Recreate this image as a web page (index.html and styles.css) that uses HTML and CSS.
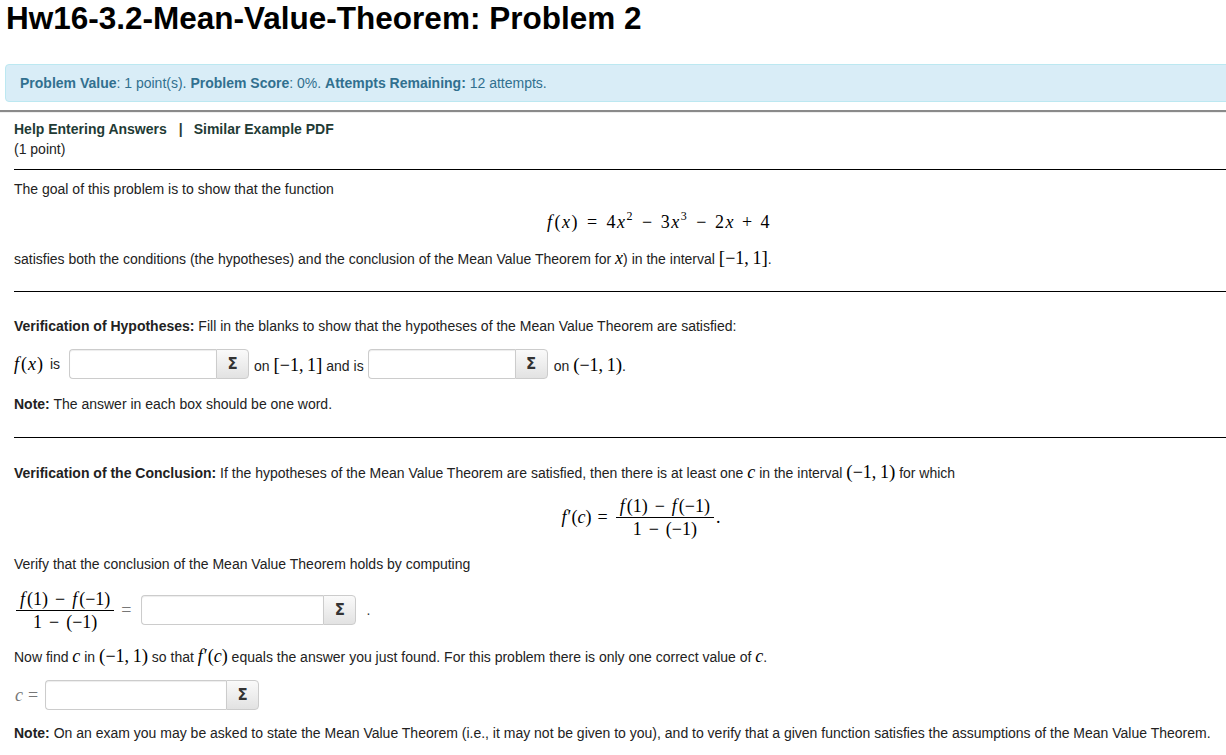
FILE: index.html
```html
<!DOCTYPE html>
<html>
<head>
<meta charset="utf-8">
<title>Hw16-3.2-Mean-Value-Theorem: Problem 2</title>
<link rel="stylesheet" href="styles.css">
</head>
<body>
<div class="page">
  <h1 class="title">Hw16-3.2-Mean-Value-Theorem: Problem 2</h1>
  <div class="alert"><b>Problem Value</b>: 1 point(s). <b>Problem Score</b>: 0%. <b>Attempts Remaining:</b> 12 attempts.</div>
  <hr class="rule-gray">
  <div class="problem">
    <div class="links"><a href="#">Help Entering Answers</a><span class="sep">|</span><a href="#">Similar Example PDF</a></div>
    <div class="pts">(1 point)</div>
    <hr class="rule rule-first">

    <p class="txt goal">The goal of this problem is to show that the function</p>
    <div class="display d-func"><span class="m"><span class="mi f">f</span>(<span class="mi">x</span>)<span class="rel">=</span>4<span class="mi">x</span><sup>2</sup><span class="op">−</span>3<span class="mi">x</span><sup>3</sup><span class="op">−</span>2<span class="mi">x</span><span class="op">+</span>4</span></div>
    <p class="txt satisfies">satisfies both the conditions (the hypotheses) and the conclusion of the Mean Value Theorem for <span class="m"><span class="mi">x</span></span>) in the interval <span class="m"><span class="br">[</span>−1,&#8201;1<span class="br">]</span></span>.</p>
    <hr class="rule rule-2">

    <p class="txt hyp"><b>Verification of Hypotheses:</b> Fill in the blanks to show that the hypotheses of the Mean Value Theorem are satisfied:</p>
    <div class="row row-hyp">
      <span class="m fx"><span class="mi f">f</span>(<span class="mi">x</span>)</span><span class="w">&nbsp;is</span>
      <span class="ans a1 first"><input class="ans-box" type="text"><span class="ans-btn">Σ</span></span>
      <span class="w">on <span class="m"><span class="br">[</span>−1,&#8201;1<span class="br">]</span></span> and is</span>
      <span class="ans a1 second"><input class="ans-box" type="text"><span class="ans-btn">Σ</span></span>
      <span class="w">on <span class="m"><span class="br">(</span>−1,&#8201;1<span class="br">)</span></span>.</span>
    </div>
    <p class="txt note1"><b>Note:</b> The answer in each box should be one word.</p>
    <hr class="rule rule-3">

    <p class="txt concl"><b>Verification of the Conclusion:</b> If the hypotheses of the Mean Value Theorem are satisfied, then there is at least one <span class="m"><span class="mi">c</span></span> in the interval <span class="m"><span class="br">(</span>−1,&#8201;1<span class="br">)</span></span> for which</p>
    <div class="display d-mvt"><span class="m dm"><span class="mi f">f</span>′(<span class="mi">c</span>)<span class="rel">=</span><span class="frac"><span class="num"><span class="mi f">f</span>(1)<span class="op">−</span><span class="mi f">f</span>(−1)</span><span class="den">1<span class="op">−</span>(−1)</span></span>.</span></div>
    <p class="txt verify">Verify that the conclusion of the Mean Value Theorem holds by computing</p>
    <div class="row row-frac">
      <span class="m dm"><span class="frac"><span class="num"><span class="mi f">f</span>(1)<span class="op">−</span><span class="mi f">f</span>(−1)</span><span class="den">1<span class="op">−</span>(−1)</span></span><span class="rel gray">=</span></span>
      <span class="ans a2"><input class="ans-box" type="text"><span class="ans-btn">Σ</span></span>
      <span class="w dot">.</span>
    </div>
    <p class="txt nowfind">Now find <span class="m"><span class="mi">c</span></span> in <span class="m"><span class="br">(</span>−1,&#8201;1<span class="br">)</span></span> so that <span class="m"><span class="mi f">f</span>′(<span class="mi">c</span>)</span> equals the answer you just found. For this problem there is only one correct value of <span class="m"><span class="mi">c</span></span>.</p>
    <div class="row row-c">
      <span class="m gray"><span class="mi">c</span><span class="rel">=</span></span>
      <span class="ans a3"><input class="ans-box" type="text"><span class="ans-btn">Σ</span></span>
    </div>
    <p class="txt note2"><b>Note:</b> On an exam you may be asked to state the Mean Value Theorem (i.e., it may not be given to you), and to verify that a given function satisfies the assumptions of the Mean Value Theorem.</p>
  </div>
</div>
</body>
</html>
```
FILE: styles.css
```css
html { overflow: hidden; }
body {
  margin: 0;
  font-family: "Liberation Sans", Arial, sans-serif;
  font-size: 14px;
  color: #222;
  background: #fff;
}
.page { width: 1290px; }
.title {
  margin: 0;
  padding-left: 6px;
  font-size: 31.5px;
  line-height: 36px;
  font-weight: bold;
  color: #000;
}
.alert {
  margin: 28px 0 0 5px;
  height: 36px;
  line-height: 36px;
  padding: 0 14px;
  background: #d9edf7;
  border: 1px solid #bce8f1;
  border-radius: 4px;
  color: #31708f;
}
.rule-gray {
  margin: 8px 0 0 0;
  border: 0;
  border-top: 2px solid #8a8a8a;
  border-bottom: 1px solid #eee;
  height: 0;
}
.problem { padding-left: 14px; }
.links { margin-top: 6px; line-height: 20px; height: 20px; font-weight: bold; }
.links a { color: #1f3b35; text-decoration: none; }
.links .sep { margin: 0 11px 0 12px; color: #1f3b35; }
.pts { line-height: 20px; height: 20px; }
.rule { margin: 0; border: 0; border-top: 1px solid #000; height: 0; }
.rule-first { margin-top: 10px; }
.txt { margin: 0; line-height: 20px; height: 20px; white-space: nowrap; }
.goal { margin-top: 9px; }
.m {
  font-family: "Liberation Serif", "DejaVu Serif", serif;
  font-size: 18px;
  line-height: 1;
  color: #000;
}
.mi { font-style: italic; }
.mi.f { margin-right: 1px; }
.br { font-size: 19px; }
.op { margin: 0 4px; }
.rel { margin: 0 5px; }
.m.gray, .gray { color: #777; }
sup { font-size: 12px; line-height: 0; vertical-align: 8px; margin-right: 1px; }
.display { text-align: center; }
.d-func { margin-top: 11px; line-height: 26px; height: 26px; padding-left: 14px; }
.d-func .m { letter-spacing: 1.5px; }
.d-func .op { margin: 0 7px; }
.d-func .rel { margin: 0 8px; }
.satisfies { margin-top: 12px; }
.rule-2 { margin-top: 23px; }
.hyp { margin-top: 24px; }
.row { display: flex; align-items: center; }
.row-hyp { margin-top: 13px; height: 30px; }
.fx { letter-spacing: 1px; margin-right: 2px; }
.w { white-space: pre; }
.ans {
  display: inline-flex;
  height: 30px;
  margin: 0 6px 0 9px;
}
.ans.first { margin: 0 5px 0 9px; }
.ans.second { margin: 0 6px 0 4px; }
.ans-box {
  box-sizing: border-box;
  height: 30px;
  margin: 0;
  border: 1px solid #ccc;
  border-right: 0;
  border-radius: 4px 0 0 4px;
  box-shadow: inset 0 1px 1px rgba(0,0,0,0.075);
  background: #fff;
  padding: 4px 6px;
  font: 14px "Liberation Sans", Arial, sans-serif;
}
.a1 .ans-box { width: 147px; }
.a2 .ans-box { width: 182px; }
.a3 .ans-box { width: 181px; }
.ans-btn {
  box-sizing: border-box;
  width: 33px;
  height: 30px;
  border: 1px solid #ccc;
  border-radius: 0 4px 4px 0;
  background: linear-gradient(#fafafa, #e2e2e2);
  display: flex;
  align-items: center;
  justify-content: center;
  font-family: "DejaVu Sans", sans-serif;
  font-weight: bold;
  font-size: 15px;
  color: #333;
}
.note1 { margin-top: 15px; }
.rule-3 { margin-top: 23px; }
.concl { margin-top: 24px; }
.d-mvt { margin-top: 11px; height: 48px; display: flex; justify-content: center; align-items: center; }
.d-mvt .dm { margin-right: 22px; }
.d-mvt .rel { margin: 0 6px; }
.dm { display: inline-flex; align-items: center; }
.frac {
  display: inline-flex;
  flex-direction: column;
  align-items: center;
  margin: 0 2px;
}
.frac .op { margin: 0 7px; }
.frac .mi.f { margin-right: 2px; }
.num { padding: 0 4px 1px; border-bottom: 1px solid #000; line-height: 20px; }
.den { padding: 1px 4px 0; line-height: 20px; }
.verify { margin-top: 13px; }
.row-frac { margin-top: 14px; height: 44px; }
.row-frac .rel { margin: 0 7px 0 5px; }
.a2 { margin-left: 3px; }
.dot { margin-left: 4px; color: #333; }
.nowfind { margin-top: 14px; }
.row-c { margin-top: 14px; height: 30px; padding-left: 1px; }
.a3 { margin-left: 2px; }
.note2 { margin-top: 13px; }
```
